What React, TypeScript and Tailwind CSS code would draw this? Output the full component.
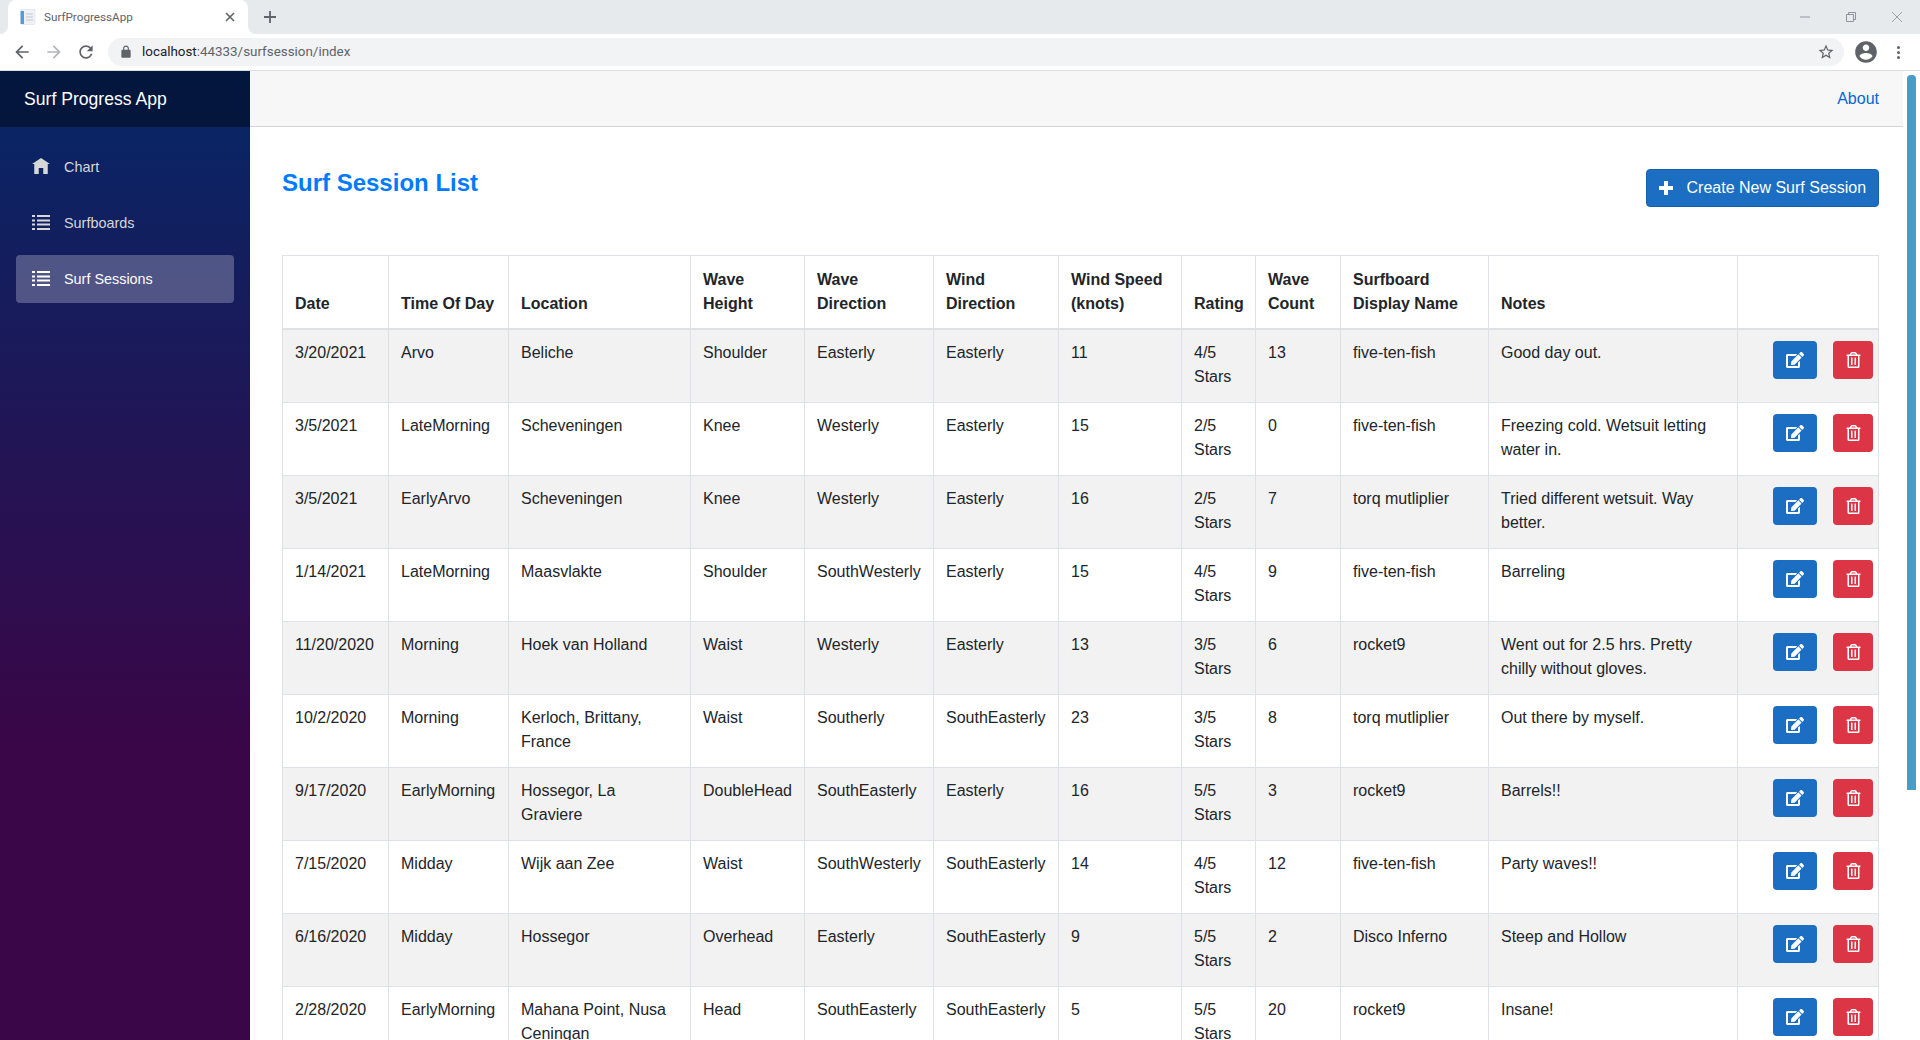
import { FaEdit, FaRegTrashAlt } from "react-icons/fa";

type Session = {
  date: string;
  time: string;
  location: string;
  height: string;
  waveDir: string;
  windDir: string;
  speed: string;
  rating: string;
  count: string;
  board: string;
  notes: string;
};

const sessions: Session[] = [
  { date: "3/20/2021", time: "Arvo", location: "Beliche", height: "Shoulder", waveDir: "Easterly", windDir: "Easterly", speed: "11", rating: "4/5 Stars", count: "13", board: "five-ten-fish", notes: "Good day out." },
  { date: "3/5/2021", time: "LateMorning", location: "Scheveningen", height: "Knee", waveDir: "Westerly", windDir: "Easterly", speed: "15", rating: "2/5 Stars", count: "0", board: "five-ten-fish", notes: "Freezing cold. Wetsuit letting water in." },
  { date: "3/5/2021", time: "EarlyArvo", location: "Scheveningen", height: "Knee", waveDir: "Westerly", windDir: "Easterly", speed: "16", rating: "2/5 Stars", count: "7", board: "torq mutliplier", notes: "Tried different wetsuit. Way better." },
  { date: "1/14/2021", time: "LateMorning", location: "Maasvlakte", height: "Shoulder", waveDir: "SouthWesterly", windDir: "Easterly", speed: "15", rating: "4/5 Stars", count: "9", board: "five-ten-fish", notes: "Barreling" },
  { date: "11/20/2020", time: "Morning", location: "Hoek van Holland", height: "Waist", waveDir: "Westerly", windDir: "Easterly", speed: "13", rating: "3/5 Stars", count: "6", board: "rocket9", notes: "Went out for 2.5 hrs. Pretty chilly without gloves." },
  { date: "10/2/2020", time: "Morning", location: "Kerloch, Brittany, France", height: "Waist", waveDir: "Southerly", windDir: "SouthEasterly", speed: "23", rating: "3/5 Stars", count: "8", board: "torq mutliplier", notes: "Out there by myself." },
  { date: "9/17/2020", time: "EarlyMorning", location: "Hossegor, La Graviere", height: "DoubleHead", waveDir: "SouthEasterly", windDir: "Easterly", speed: "16", rating: "5/5 Stars", count: "3", board: "rocket9", notes: "Barrels!!" },
  { date: "7/15/2020", time: "Midday", location: "Wijk aan Zee", height: "Waist", waveDir: "SouthWesterly", windDir: "SouthEasterly", speed: "14", rating: "4/5 Stars", count: "12", board: "five-ten-fish", notes: "Party waves!!" },
  { date: "6/16/2020", time: "Midday", location: "Hossegor", height: "Overhead", waveDir: "Easterly", windDir: "SouthEasterly", speed: "9", rating: "5/5 Stars", count: "2", board: "Disco Inferno", notes: "Steep and Hollow" },
  { date: "2/28/2020", time: "EarlyMorning", location: "Mahana Point, Nusa Ceningan", height: "Head", waveDir: "SouthEasterly", windDir: "SouthEasterly", speed: "5", rating: "5/5 Stars", count: "20", board: "rocket9", notes: "Insane!" },
];

const headers = ["Date", "Time Of Day", "Location", "Wave Height", "Wave Direction", "Wind Direction", "Wind Speed (knots)", "Rating", "Wave Count", "Surfboard Display Name", "Notes", ""];
const colWidths = [106, 120, 182, 114, 129, 125, 123, 74, 85, 148, 249, 141];

function MaterialIcon({ d, className }: { d: string; className: string }) {
  return (
    <svg viewBox="0 0 24 24" fill="currentColor" className={className}>
      <path d={d} />
    </svg>
  );
}

function HomeIcon() {
  return (
    <svg viewBox="0 0 8 8" preserveAspectRatio="none" fill="currentColor" className="w-[18px] h-4 mb-[2px]">
      <path d="M4 0l-4 3h1v5h2v-3h2v3h2v-5h1z" />
    </svg>
  );
}

function ListIcon() {
  return (
    <svg viewBox="0 0 18 16" fill="currentColor" className="w-[18px] h-4 mb-[2px]">
      <path d="M0 1h3v2h-3zM5 1h13v2h-13zM0 5.5h3v2h-3zM5 5.5h13v2h-13zM0 9.5h3v2h-3zM5 9.5h13v2h-13zM0 14h3v2h-3zM5 14h13v2h-13z" />
    </svg>
  );
}

function BrowserChrome() {
  return (
    <div className="shrink-0 font-['Roboto',sans-serif]">
      {/* Tab strip */}
      <div className="h-[34px] bg-white flex items-stretch">
        <div className="w-2 bg-[#e7eaed] rounded-br-lg" />
        <div className="w-[240px] bg-[#e7eaed]">
          <div className="h-full bg-white rounded-t-lg flex items-center pl-3 pr-3">
            <svg viewBox="0 0 16 16" className="w-4 h-4 shrink-0">
              <rect x="1" y="0.5" width="14" height="15" fill="#eef1f5" stroke="#d5dae0" strokeWidth="0.5" />
              <rect x="0.5" y="2" width="3.5" height="13" fill="#5b9bd5" />
              <path d="M6 5h7M6 8h7M6 11h7" stroke="#c3c9d0" strokeWidth="1" />
            </svg>
            <span className="ml-2 pt-px text-[11.7px] text-[#5f6368] flex-1">SurfProgressApp</span>
            <svg viewBox="0 0 10 10" className="w-[10px] h-[10px] mr-[1px]" stroke="#5f6368" strokeWidth="1.6">
              <path d="M1 1l8 8M9 1l-8 8" />
            </svg>
          </div>
        </div>
        <div className="flex items-center pl-4 flex-1 bg-[#e7eaed] rounded-bl-lg">
          <svg viewBox="0 0 12 12" className="w-3 h-3" stroke="#5f6368" strokeWidth="1.8">
            <path d="M6 0v12M0 6h12" />
          </svg>
          <div className="flex-1" />
          <div className="flex items-center gap-[36px] pr-[18px]">
            <svg viewBox="0 0 10 10" className="w-[10px] h-[10px]" stroke="#7b7f84" strokeWidth="0.8"><path d="M0 5h10" /></svg>
            <svg viewBox="0 0 10 10" className="w-[10px] h-[10px]" stroke="#7b7f84" strokeWidth="0.8" fill="none"><path d="M0.5 2.5h7v7h-7zM2.5 2.5v-2h7v7h-2" /></svg>
            <svg viewBox="0 0 10 10" className="w-[10px] h-[10px]" stroke="#7b7f84" strokeWidth="0.7"><path d="M0 0l10 10M10 0l-10 10" /></svg>
          </div>
        </div>
      </div>
      {/* Toolbar */}
      <div className="h-[37px] bg-white border-b border-[#dadce0] flex items-center pl-3 pr-3">
        <MaterialIcon d="M20 11H7.83l5.59-5.59L12 4l-8 8 8 8 1.41-1.41L7.83 13H20v-2z" className="w-5 h-5 text-[#5f6368]" />
        <MaterialIcon d="M12 4l-1.41 1.41L16.17 11H4v2h12.17l-5.58 5.59L12 20l8-8z" className="w-5 h-5 text-[#b3b6ba] ml-3" />
        <MaterialIcon d="M17.65 6.35C16.2 4.9 14.21 4 12 4c-4.42 0-7.99 3.58-7.99 8s3.57 8 7.99 8c3.73 0 6.84-2.55 7.73-6h-2.08c-.82 2.33-3.04 4-5.65 4-3.31 0-6-2.69-6-6s2.69-6 6-6c1.66 0 3.14.69 4.22 1.78L13 11h7V4l-2.35 2.35z" className="w-5 h-5 text-[#5f6368] ml-3" />
        <div className="ml-3 w-[1736px] h-7 rounded-full bg-[#f1f3f4] flex items-center pl-[11px] pr-[9px]">
          <MaterialIcon d="M18 8h-1V6c0-2.76-2.24-5-5-5S7 3.24 7 6v2H6c-1.1 0-2 .9-2 2v10c0 1.1.9 2 2 2h12c1.1 0 2-.9 2-2V10c0-1.1-.9-2-2-2zM9 6c0-1.66 1.34-3 3-3s3 1.34 3 3v2H9V6z" className="w-[14px] h-[14px] text-[#5f6368]" />
          <span className="ml-[9px] pt-px text-[13.4px] text-[#5f6368] flex-1">
            <span className="text-[#202124]">localhost</span>:44333/surfsession/index
          </span>
          <MaterialIcon d="M22 9.24l-7.19-.62L12 2 9.19 8.63 2 9.24l5.46 4.73L5.82 21 12 17.27 18.18 21l-1.63-7.03L22 9.24zM12 15.4l-3.76 2.27 1-4.28-3.32-2.88 4.38-.38L12 6.1l1.71 4.04 4.38.38-3.32 2.88 1 4.28L12 15.4z" className="w-[18px] h-[18px] text-[#5f6368]" />
        </div>
        <MaterialIcon d="M12 2C6.48 2 2 6.48 2 12s4.48 10 10 10 10-4.48 10-10S17.52 2 12 2zm0 3c1.66 0 3 1.34 3 3s-1.34 3-3 3-3-1.34-3-3 1.34-3 3-3zm0 14.2c-2.5 0-4.71-1.28-6-3.22.03-1.99 4-3.08 6-3.08 1.99 0 5.97 1.09 6 3.08-1.29 1.94-3.5 3.22-6 3.22z" className="w-[26px] h-[26px] text-[#5f6368] ml-[9px]" />
        <div className="ml-[18px] flex flex-col gap-[2px]">
          <span className="w-[3px] h-[3px] rounded-full bg-[#5f6368]" />
          <span className="w-[3px] h-[3px] rounded-full bg-[#5f6368]" />
          <span className="w-[3px] h-[3px] rounded-full bg-[#5f6368]" />
        </div>
      </div>
    </div>
  );
}

function NavItem({ icon, label, active }: { icon: React.ReactNode; label: string; active?: boolean }) {
  return (
    <a className={`h-12 flex items-center pl-4 rounded text-[14.4px] ${active ? "bg-white/25 text-white" : "text-[#d7d7d7]"}`}>
      {icon}
      <span className="ml-[14px] pt-px">{label}</span>
    </a>
  );
}

function Sidebar() {
  return (
    <aside className="w-[250px] shrink-0 bg-[linear-gradient(180deg,#052767_0%,#3a0647_70%)] flex flex-col">
      <div className="h-14 bg-black/40 flex items-center pl-6 text-white text-[17.6px]">Surf Progress App</div>
      <nav className="px-4 pt-4 flex flex-col gap-2">
        <NavItem icon={<HomeIcon />} label="Chart" />
        <NavItem icon={<ListIcon />} label="Surfboards" />
        <NavItem icon={<ListIcon />} label="Surf Sessions" active />
      </nav>
    </aside>
  );
}

export default function App() {
  return (
    <div className="h-screen overflow-hidden flex flex-col bg-white text-[#212529] font-['Liberation_Sans',Arial,sans-serif]">
      <BrowserChrome />
      <div className="flex-1 flex min-h-0">
        <Sidebar />

        <main className="flex-1 min-w-0 overflow-hidden">
          <div className="h-14 bg-[#f7f7f7] border-b border-[#d6d5d5] flex items-center justify-end pr-6">
            <a className="text-[#0366d6]">About</a>
          </div>

          <div className="pl-8 pr-6 pt-[42px]">
            <div className="flex justify-between items-start h-[86px]">
              <h1 className="text-2xl font-bold text-[#007bff] leading-[28px]">Surf Session List</h1>
              <button className="h-[38px] w-[233px] rounded bg-[#1b6ec2] border border-[#1861ac] text-white flex items-center pl-3">
                <svg viewBox="0 0 14 14" fill="currentColor" className="w-[14px] h-[14px]">
                  <path d="M5 .5a.5.5 0 0 1 .5-.5h3a.5.5 0 0 1 .5.5V5h4.5a.5.5 0 0 1 .5.5v3a.5.5 0 0 1-.5.5H9v4.5a.5.5 0 0 1-.5.5h-3a.5.5 0 0 1-.5-.5V9H.5a.5.5 0 0 1-.5-.5v-3A.5.5 0 0 1 .5 5H5z" />
                </svg>
                <span className="ml-[13.5px]">Create New Surf Session</span>
              </button>
            </div>

            <table className="table-fixed border-collapse w-[1596px]">
              <colgroup>
                {colWidths.map((w, i) => (
                  <col key={i} style={{ width: w }} />
                ))}
              </colgroup>
              <thead>
                <tr>
                  {headers.map((h, i) => (
                    <th key={i} className="border border-[#dee2e6] border-b-2 p-3 text-left align-bottom font-bold">
                      {h}
                    </th>
                  ))}
                </tr>
              </thead>
              <tbody>
                {sessions.map((s, i) => (
                  <tr key={i} className={i % 2 === 0 ? "bg-[#f2f2f2]" : ""}>
                    <td className="border border-[#dee2e6] px-3 pt-[11px] pb-[13px] align-top">{s.date}</td>
                    <td className="border border-[#dee2e6] px-3 pt-[11px] pb-[13px] align-top">{s.time}</td>
                    <td className="border border-[#dee2e6] px-3 pt-[11px] pb-[13px] align-top">{s.location}</td>
                    <td className="border border-[#dee2e6] px-3 pt-[11px] pb-[13px] align-top">{s.height}</td>
                    <td className="border border-[#dee2e6] px-3 pt-[11px] pb-[13px] align-top">{s.waveDir}</td>
                    <td className="border border-[#dee2e6] px-3 pt-[11px] pb-[13px] align-top">{s.windDir}</td>
                    <td className="border border-[#dee2e6] px-3 pt-[11px] pb-[13px] align-top">{s.speed}</td>
                    <td className="border border-[#dee2e6] px-3 pt-[11px] pb-[13px] align-top">{s.rating}</td>
                    <td className="border border-[#dee2e6] px-3 pt-[11px] pb-[13px] align-top">{s.count}</td>
                    <td className="border border-[#dee2e6] px-3 pt-[11px] pb-[13px] align-top">{s.board}</td>
                    <td className="border border-[#dee2e6] px-3 pt-[11px] pb-[13px] align-top">{s.notes}</td>
                    <td className="border border-[#dee2e6] px-3 pt-[11px] pb-[13px] align-top">
                      <div className="flex justify-end gap-4 -mr-[7px]">
                        <button className="w-11 h-[38px] rounded bg-[#1b6ec2] text-white flex items-center justify-center">
                          <FaEdit className="w-[18px] h-4" />
                        </button>
                        <button className="w-10 h-[38px] rounded bg-[#dc3545] text-white flex items-center justify-center">
                          <FaRegTrashAlt className="w-[15px] h-4" />
                        </button>
                      </div>
                    </td>
                  </tr>
                ))}
              </tbody>
            </table>
          </div>
        </main>

        {/* Page scrollbar */}
        <div className="w-[17px] shrink-0 pl-1 pt-1">
          <div className="w-[9px] h-[715px] rounded-t bg-[#479cc9]" />
        </div>
      </div>
    </div>
  );
}
